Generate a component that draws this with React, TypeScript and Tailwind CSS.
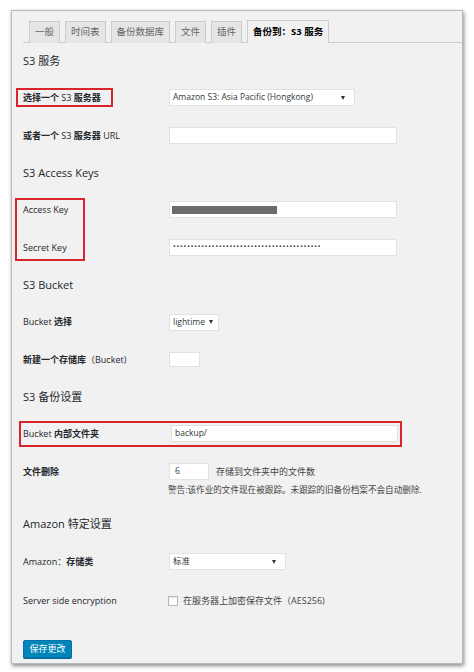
import React from 'react';

const font = { fontFamily: '"Open Sans", "Noto Sans CJK SC", sans-serif' };

const tabs = ['一般', '时间表', '备份数据库', '文件', '插件'];

const Caret = () => (
  <span className="w-0 h-0 border-l-[2.5px] border-r-[2.5px] border-t-[4px] border-l-transparent border-r-transparent border-t-[#333]" />
);

const Heading = ({ children }: { children: React.ReactNode }) => (
  <div className="flex items-center text-[11px] text-[#23282d]">{children}</div>
);

const B = ({ children }: { children: React.ReactNode }) => <span className="font-bold">{children}</span>;

export default function App() {
  return (
    <div className="min-h-[672px] bg-white pt-[10px] pl-[11px]" style={font}>
      <div className="w-[452px] bg-[#f1f1f1] border border-[#b8b8b8] shadow-[1px_2px_4px_rgba(0,0,0,0.45)] pl-[11px] pb-[5px]">
        {/* tabs */}
        <div className="flex items-end gap-[5px] pl-[6px] pt-[9px] border-b border-[#cccccc] h-[32px]">
          {tabs.map((t) => (
            <div
              key={t}
              className="h-[22px] px-[5px] flex items-center text-[9.5px] text-[#666] bg-[#e5e5e5] border border-b-0 border-[#cccccc] -mb-px"
            >
              {t}
            </div>
          ))}
          <div className="h-[23px] px-[5px] flex items-center text-[9.5px] font-bold text-[#000] bg-[#f1f1f1] border border-b-0 border-[#cccccc] -mb-px">
            备份到：S3 服务
          </div>
        </div>

        <div className="flex flex-col text-[9px] text-[#23282d]">
          <div className="h-[36px] flex items-center"><Heading>S3 服务</Heading></div>

          <div className="h-[37px] flex items-center">
            <div className="w-[146px]">
              <span className="-ml-[7px] pl-[5px] pr-[10px] py-[1px] border-2 border-[#d8242c]">
                <B>选择一个</B> S3 <B>服务器</B>
              </span>
            </div>
            <div className="w-[186px] h-[17px] bg-white border border-[#e2e2e2] flex items-center justify-between pl-[3px] pr-[9px] text-[8.5px] text-[#32373c]">
              Amazon S3: Asia Pacific (Hongkong)
              <Caret />
            </div>
          </div>

          <div className="h-[39px] flex items-center">
            <div className="w-[146px]"><B>或者一个</B> S3 <B>服务器</B> URL</div>
            <div className="w-[228px] h-[17px] bg-white border border-[#e2e2e2]" />
          </div>

          <div className="h-[36px] flex items-center"><Heading>S3 Access Keys</Heading></div>

          <div className="relative">
            <div className="absolute left-[-8px] top-[7px] w-[70px] h-[63px] border-2 border-[#d8242c]" />
            <div className="h-[37px] flex items-center">
              <div className="w-[146px]">Access Key</div>
              <div className="w-[228px] h-[17px] bg-white border border-[#e2e2e2] flex items-center pl-[2px]">
                <div className="w-[105px] h-[8px] bg-[#6b6b6b]" />
              </div>
            </div>
            <div className="h-[39px] flex items-center">
              <div className="w-[146px]">Secret Key</div>
              <div className="w-[228px] h-[17px] bg-white border border-[#e2e2e2] flex items-center pl-[3px] text-[7px] tracking-[0.9px] text-[#333] overflow-hidden whitespace-nowrap">
                {'•'.repeat(42)}
              </div>
            </div>
          </div>

          <div className="h-[37px] flex items-center"><Heading>S3 Bucket</Heading></div>

          <div className="h-[36px] flex items-center">
            <div className="w-[146px]">Bucket <B>选择</B></div>
            <div className="w-[50px] h-[17px] bg-white border border-[#e2e2e2] flex items-center justify-between pl-[3px] pr-[5px] text-[8.5px] text-[#32373c]">
              lightime
              <Caret />
            </div>
          </div>

          <div className="h-[39px] flex items-center">
            <div className="w-[146px]"><B>新建一个存储库</B>（Bucket)</div>
            <div className="w-[31px] h-[15px] bg-white border border-[#e2e2e2]" />
          </div>

          <div className="h-[36px] flex items-center"><Heading>S3 备份设置</Heading></div>

          <div className="h-[37px] flex items-center">
            <div className="relative flex items-center -ml-[4px] pl-[2px] w-[383px] h-[26px] border-2 border-[#d8242c]">
              <div className="w-[148px]">Bucket <B>内部文件夹</B></div>
              <div className="w-[227px] h-[17px] bg-white border border-[#e2e2e2] flex items-center pl-[3px] text-[8.5px] text-[#32373c]">
                backup/
              </div>
            </div>
          </div>

          <div className="h-[54px] pt-[11px] flex items-start">
            <div className="w-[146px] h-[17px] flex items-center"><B>文件删除</B></div>
            <div className="flex flex-col">
              <div className="flex items-center gap-[7px]">
                <div className="w-[40px] h-[17px] bg-white border border-[#e2e2e2] flex items-center pl-[5px] text-[8.5px] text-[#32373c]">6</div>
                <span className="text-[9px] text-[#444]">存储到文件夹中的文件数</span>
              </div>
              <div className="-ml-[1px] mt-[4px] text-[8.6px] text-[#444] whitespace-nowrap">
                警告:该作业的文件现在被跟踪。未跟踪的旧备份档案不会自动删除.
              </div>
            </div>
          </div>

          <div className="h-[36px] flex items-center"><Heading>Amazon 特定设置</Heading></div>

          <div className="h-[39px] flex items-center">
            <div className="w-[146px]">
              Amazon：<B>存储类</B>
            </div>
            <div className="w-[117px] h-[17px] bg-white border border-[#e2e2e2] flex items-center justify-between pl-[3px] pr-[9px] text-[8.5px] text-[#32373c]">
              标准
              <Caret />
            </div>
          </div>

          <div className="h-[40px] flex items-center">
            <div className="w-[145px]">Server side encryption</div>
            <div className="flex items-center gap-[5px]">
              <div className="w-[10px] h-[10px] bg-white border border-[#b4b9be] shadow-[inset_0_1px_2px_rgba(0,0,0,0.1)]" />
              <span className="text-[9px] text-[#444]">在服务器上加密保存文件（AES256)</span>
            </div>
          </div>

          <div className="pt-[19px]">
            <button className="w-[49px] h-[18px] rounded-[2px] bg-[#0085ba] border border-[#0073aa] text-white text-[9px] shadow-[0_1px_0_#006799]">
              保存更改
            </button>
          </div>
        </div>
      </div>
    </div>
  );
}
